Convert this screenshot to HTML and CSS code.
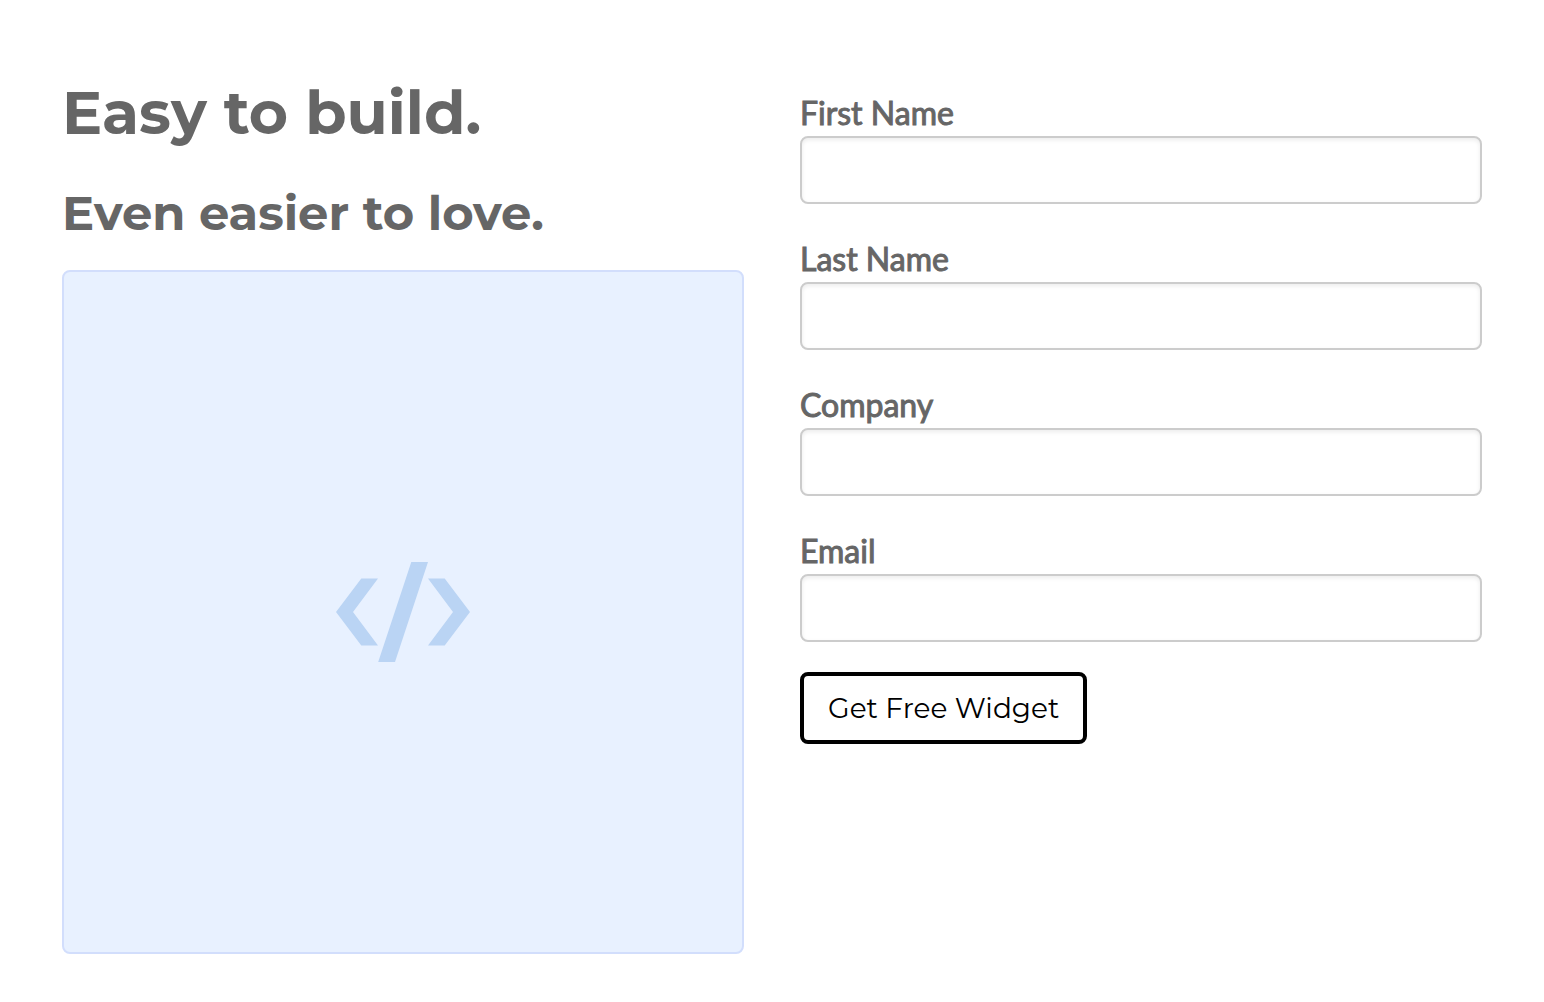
FILE: index.html
```html
<!DOCTYPE html>
<html lang="en">
<head>
<meta charset="utf-8">
<meta name="viewport" content="width=device-width, initial-scale=1">
<title>Get Free Widget</title>
<link rel="stylesheet" href="styles.css">
</head>
<body>
<main class="landing">
  <section class="intro">
    <h1 class="title">Easy to build.</h1>
    <h2 class="subtitle">Even easier to love.</h2>
    <div class="embed">
      <svg class="embed-icon" viewBox="0 0 134 100" aria-hidden="true">
        <path d="M75.3 0H92L59 100H42.2ZM25.3 16.5H42L17 50L42 83.5H25.3L0 50ZM92 16.5H108.7L134 50L108.7 83.5H92L117 50Z"/>
      </svg>
    </div>
  </section>
  <form class="signup">
    <div class="field">
      <label class="label" for="first-name">First Name</label>
      <input class="input" id="first-name" type="text">
    </div>
    <div class="field">
      <label class="label" for="last-name">Last Name</label>
      <input class="input" id="last-name" type="text">
    </div>
    <div class="field">
      <label class="label" for="company">Company</label>
      <input class="input" id="company" type="text">
    </div>
    <div class="field">
      <label class="label" for="email">Email</label>
      <input class="input" id="email" type="email">
    </div>
    <button class="submit" type="submit">Get Free Widget</button>
  </form>
</main>
</body>
</html>
```
FILE: styles.css
```css
* {
  box-sizing: border-box;
}

body {
  margin: 0;
  background: #fff;
  color: #666;
  font-family: Lato, sans-serif;
}

.landing {
  display: grid;
  grid-template-columns: 1fr 1fr;
  gap: 56px;
  align-items: start;
  padding: 76px 62px 48px;
}

.title,
.subtitle {
  margin: 0;
  font-family: Montserrat, Inter, sans-serif;
  font-weight: 700;
}

.title {
  font-size: 60px;
  line-height: 74px;
}

.subtitle {
  margin: 30px 0 24px;
  font-size: 48px;
  line-height: 66px;
}

.embed {
  display: flex;
  align-items: center;
  justify-content: center;
  aspect-ratio: 341 / 342;
  border: 2px solid #d2defc;
  border-radius: 8px;
  background: #e8f1ff;
}

.embed-icon {
  width: 134px;
  height: 100px;
  fill: #bad4f4;
}

.signup {
  display: flex;
  flex-direction: column;
  align-items: flex-start;
  padding-top: 16px;
}

.field {
  display: flex;
  flex-direction: column;
  width: 100%;
  margin-bottom: 34px;
}

.field:last-of-type {
  margin-bottom: 30px;
}

.label {
  margin-bottom: 2px;
  font-size: 32px;
  line-height: 42px;
  -webkit-text-stroke: 1px currentColor;
}

.input {
  width: 100%;
  height: 68px;
  padding: 8px 12px;
  border: 2px solid #ccc;
  border-radius: 8px;
  background: #fff;
  box-shadow: inset 0 2px 4px rgba(0, 0, 0, 0.08);
  color: inherit;
  font: inherit;
  font-size: 32px;
}

.submit {
  padding: 14px 24px;
  border: 4px solid #000;
  border-radius: 8px;
  background: #fff;
  color: #000;
  font-family: Montserrat, Inter, sans-serif;
  font-size: 28px;
  line-height: 36px;
}
```
